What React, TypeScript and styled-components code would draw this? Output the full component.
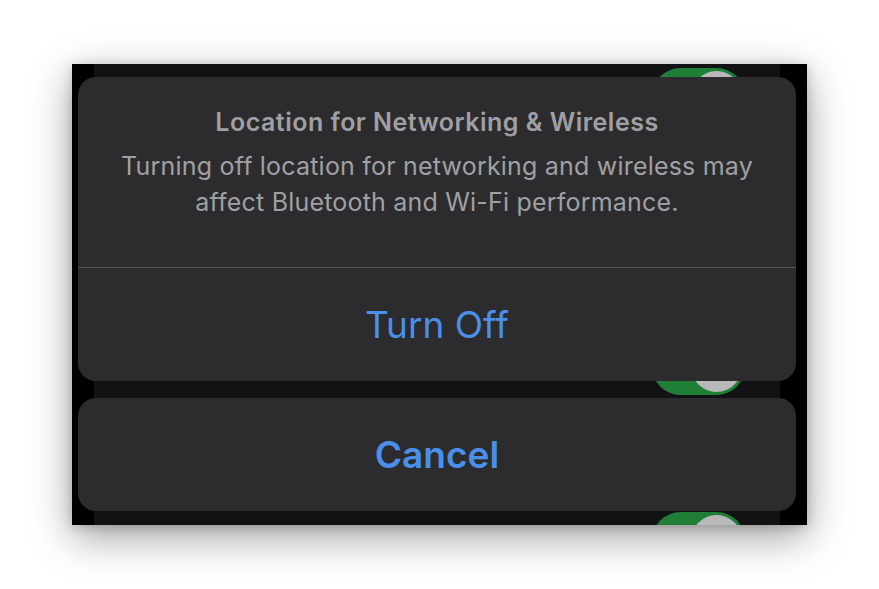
import styled, { createGlobalStyle } from "styled-components";

const GlobalStyle = createGlobalStyle`
  html, body {
    margin: 0;
    padding: 0;
    background: #ffffff;
  }
  body {
    font-family: Inter, "Noto Sans", "Liberation Sans", sans-serif;
    -webkit-font-smoothing: antialiased;
  }
`

const Page = styled.div`
  width: 879px;
  height: 589px;
  padding: 64px 72px 0 72px;
  box-sizing: border-box;
  background: #ffffff;
`

const Screen = styled.div`
  position: relative;
  width: 735px;
  height: 461px;
  display: flex;
  background: #000000;
  box-shadow: 0 12px 38px rgba(0, 0, 0, 0.38), 0 2px 10px rgba(0, 0, 0, 0.18);
  overflow: hidden;
`

const Edge = styled.div<{ $width: number }>`
  width: ${p => p.$width}px;
  flex: none;
  background: #000000;
`

const SettingsList = styled.div`
  flex: 1;
  display: flex;
  flex-direction: column;
  background: #121214;
  padding-right: 35px;
`

const ToggleRow = styled.div<{ $top: number }>`
  margin-top: ${p => p.$top}px;
  display: flex;
  justify-content: flex-end;
`

const Toggle = styled.div`
  width: 93px;
  height: 57px;
  border-radius: 29px;
  background: #1f7f36;
  display: flex;
  align-items: center;
  justify-content: flex-end;
  padding: 0 3px;
  box-sizing: border-box;

  &::after {
    content: "";
    width: 51px;
    height: 51px;
    border-radius: 50%;
    background: #b9b9bb;
  }
`

// action sheet floating over the dimmed settings list
const Sheet = styled.div`
  position: absolute;
  top: 13px;
  left: 6px;
  right: 11px;
  display: flex;
  flex-direction: column;
  gap: 17px;
`

const Group = styled.div`
  background: #2c2c2e;
  border-radius: 18px;
  display: flex;
  flex-direction: column;
  overflow: hidden;
`

const Header = styled.div`
  padding: 30px 20px 47px;
  display: flex;
  flex-direction: column;
  align-items: center;
  text-align: center;
  gap: 11px;
  border-bottom: 1px solid #545456;
`

const Title = styled.div`
  font-size: 25px;
  line-height: 30px;
  font-weight: 600;
  letter-spacing: 0.5px;
  color: #a0a0a4;
`

const Message = styled.div`
  font-size: 25px;
  line-height: 36px;
  font-weight: 400;
  letter-spacing: 0.2px;
  color: #a0a0a4;
  white-space: nowrap;
`

const ActionButton = styled.button<{ $bold?: boolean }>`
  height: 113px;
  border: none;
  background: transparent;
  font-family: inherit;
  font-size: 37px;
  font-weight: ${p => (p.$bold ? 600 : 400)};
  color: #4a8fe9;
  cursor: pointer;
`

export default function App(): JSX.Element {
  return (
    <>
      <GlobalStyle />
      <Page>
        <Screen>
          <Edge $width={22} />
          <SettingsList>
            <ToggleRow $top={4}>
              <Toggle />
            </ToggleRow>
            <ToggleRow $top={213}>
              <Toggle />
            </ToggleRow>
            <ToggleRow $top={117}>
              <Toggle />
            </ToggleRow>
          </SettingsList>
          <Edge $width={27} />

          <Sheet>
            <Group>
              <Header>
                <Title>Location for Networking &amp; Wireless</Title>
                <Message>
                  Turning off location for networking and wireless may
                  <br />
                  affect Bluetooth and Wi-Fi performance.
                </Message>
              </Header>
              <ActionButton>Turn Off</ActionButton>
            </Group>
            <Group>
              <ActionButton $bold>Cancel</ActionButton>
            </Group>
          </Sheet>
        </Screen>
      </Page>
    </>
  )
}
